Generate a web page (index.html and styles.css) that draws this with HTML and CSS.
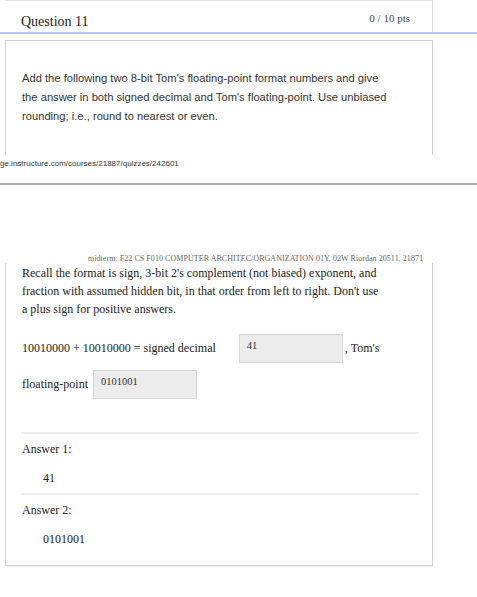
FILE: index.html
```html
<!DOCTYPE html>
<html>
<head>
<meta charset="utf-8">
<link rel="stylesheet" href="styles.css">
</head>
<body>
<div class="qhead">
  <div class="qtitle">Question 11</div>
  <div class="qpts">0 / 10 pts</div>
</div>
<div class="blueline"></div>
<div class="qbody">
  <p class="qtext">Add the following two 8-bit Tom's floating-point format numbers and give the answer in both signed decimal and Tom's floating-point. Use unbiased rounding; i.e., round to nearest or even.</p>
</div>
<div class="url">ge.instructure.com/courses/21887/quizzes/242601</div>
<div class="sepline"></div>
<div class="printhead">midterm: F22 CS F010 COMPUTER ARCHITEC/ORGANIZATION 01Y, 02W Riordan 20511, 21871</div>
<div class="card">
  <p class="ptext">Recall the format is sign, 3-bit 2's complement (not biased) exponent, and fraction with assumed hidden bit, in that order from left to right. Don't use a plus sign for positive answers.</p>
  <div class="row row1">
    <span>10010000 + 10010000 = signed decimal</span>
    <span class="inbox inbox1">41</span>
    <span class="after">, Tom's</span>
  </div>
  <div class="row row2">
    <span>floating-point</span>
    <span class="inbox inbox2">0101001</span>
  </div>
  <div class="answers">
    <div class="ans">
      <div class="alabel">Answer 1:</div>
      <div class="aval">41</div>
    </div>
    <div class="ans">
      <div class="alabel">Answer 2:</div>
      <div class="aval">0101001</div>
    </div>
  </div>
</div>
</body>
</html>
```
FILE: styles.css
```css
html, body {
  margin: 0;
  padding: 0;
  background: #ffffff;
}
body {
  width: 477px;
  height: 597px;
  overflow: hidden;
  font-family: "Liberation Serif", "Times New Roman", serif;
  color: #222;
}
.qhead {
  margin-left: 5px;
  width: 389px;
  height: 31px;
  border-top: 1px solid #e6e6e6;
  border-right: 1px solid #dcdcdc;
  padding: 0 22px 0 16px;
  display: flex;
  justify-content: space-between;
}
.qtitle {
  font-size: 14px;
  margin-top: 13px;
  color: #222;
}
.qpts {
  font-size: 11px;
  margin-top: 11px;
  color: #444;
}
.blueline {
  height: 2px;
  background: #b6c4f2;
}
.qbody {
  margin-top: 6px;
  margin-left: 5px;
  width: 426px;
  height: 114px;
  border: 1px solid #cfcfcf;
  border-bottom: none;
}
.qtext {
  margin: 28px 0 0 16px;
  width: 368px;
  font-family: "Liberation Sans", Arial, sans-serif;
  font-size: 11.2px;
  line-height: 19px;
  color: #333;
}
.url {
  margin-top: 3px;
  font-family: "Liberation Sans", Arial, sans-serif;
  font-size: 8px;
  color: #333;
  height: 12px;
  line-height: 12px;
}
.sepline {
  margin-top: 13px;
  height: 2px;
  background: #b0b0b0;
}
.printhead {
  margin-top: 69px;
  padding-left: 88px;
  font-size: 8px;
  letter-spacing: 0.05px;
  color: #666;
  height: 9px;
  line-height: 9px;
}
.card {
  margin-left: 5px;
  width: 426px;
  height: 301px;
  border: 1px solid #d0d0d0;
  border-top: none;
  box-shadow: 0 1px 1px rgba(0,0,0,0.06);
  padding-top: 1px;
}
.ptext {
  margin: 0 0 0 16px;
  width: 360px;
  font-size: 12px;
  line-height: 18px;
  color: #222;
}
.row {
  margin-left: 16px;
  display: flex;
  align-items: center;
  font-size: 12px;
}
.row1 {
  margin-top: 16px;
}
.row2 {
  margin-top: 7px;
}
.inbox {
  box-sizing: border-box;
  height: 29px;
  width: 104px;
  background: #ececec;
  border: 1px solid #d6d6d6;
  font-size: 10.5px;
  color: #333;
  padding: 5px 0 0 7px;
}
.inbox1 {
  margin-left: 23px;
}
.after {
  margin-left: 2px;
}
.inbox2 {
  margin-left: 5px;
}
.answers {
  margin: 33px 0 0 15px;
  width: 398px;
}
.ans {
  border-top: 2px solid #eeeeee;
  height: 59px;
}
.alabel {
  margin-top: 7px;
  margin-left: 1px;
  font-size: 12px;
  line-height: 16px;
}
.aval {
  margin-top: 13px;
  margin-left: 22px;
  font-size: 12px;
  line-height: 16px;
}
```
